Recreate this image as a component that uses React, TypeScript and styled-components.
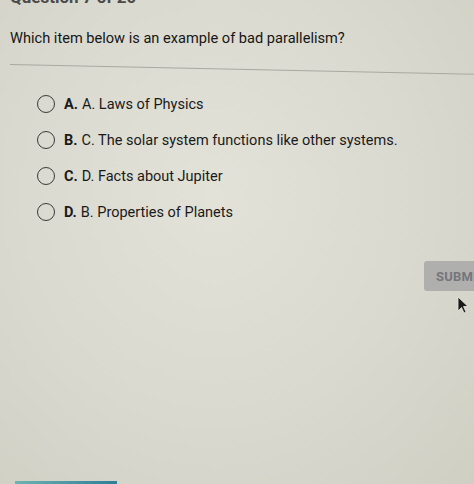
import React, { FC } from "react";
import styled, { createGlobalStyle } from "styled-components";

const GlobalStyle = createGlobalStyle`
  html, body {
    margin: 0;
    padding: 0;
    background: #d6d6cc;
  }
  body {
    font-family: Roboto, "Liberation Sans", Arial, sans-serif;
    color: #1f1f1f;
  }
`;

const Page = styled.div`
  position: relative;
  width: 474px;
  height: 484px;
  overflow: hidden;
  display: flex;
  flex-direction: column;
  background: radial-gradient(
    ellipse at 45% 40%,
    #e2e2d9 0%,
    #d9d9cf 55%,
    #cfcfc4 100%
  );
`;

const QuestionCount = styled.div`
  margin-top: -12px;
  padding-left: 10px;
  font-size: 17px;
  font-weight: 700;
  color: #4a4a48;
  height: 18px;
  line-height: 18px;
`;

const Prompt = styled.h1`
  margin: 22px 0 0 10px;
  font-size: 14.6px;
  font-weight: 400;
  line-height: 20px;
  color: #161616;
`;

const Divider = styled.hr`
  margin: 16px 0 0 10px;
  border: 0;
  border-top: 1px solid #a9a9a2;
  transform: rotate(1.2deg);
  transform-origin: left;
`;

const OptionList = styled.ul`
  list-style: none;
  margin: 28px 0 0 0;
  padding: 0 0 0 37px;
  display: flex;
  flex-direction: column;
  gap: 14px;
`;

const Option = styled.li`
  display: flex;
  align-items: center;
  gap: 9px;
  height: 22px;
  font-size: 14.5px;
  color: #1a1a1a;
`;

const Radio = styled.span`
  width: 16px;
  height: 16px;
  border: 1.5px solid #3a3a3a;
  border-radius: 50%;
  flex-shrink: 0;
`;

const Letter = styled.b`
  font-weight: 700;
  margin-right: 4px;
`;

const Actions = styled.div`
  display: flex;
  justify-content: flex-end;
  margin-top: 38px;
  margin-right: -30px;
`;

const SubmitButton = styled.button`
  width: 80px;
  height: 30px;
  border: 0;
  border-radius: 3px;
  background: #afafad;
  color: #76767a;
  font-family: inherit;
  font-size: 13px;
  font-weight: 700;
  letter-spacing: 0.2px;
  text-align: left;
  padding-left: 12px;
`;

const Cursor = styled.svg`
  position: absolute;
  left: 457px;
  top: 296px;
`;

const Footer = styled.div`
  margin-top: auto;
  height: 3px;
  padding-left: 15px;
  display: flex;
`;

const TaskItem = styled.div`
  width: 102px;
  height: 3px;
  background: linear-gradient(90deg, #6fb2b0, #2e7f98);
`;

const options = [
  { letter: "A.", text: "A. Laws of Physics" },
  { letter: "B.", text: "C. The solar system functions like other systems." },
  { letter: "C.", text: "D. Facts about Jupiter" },
  { letter: "D.", text: "B. Properties of Planets" },
];

const App: FC = () => {
  return (
    <Page>
      <GlobalStyle />
      <QuestionCount>Question 7 of 20</QuestionCount>
      <Prompt>Which item below is an example of bad parallelism?</Prompt>
      <Divider />
      <OptionList>
        {options.map((o) => (
          <Option key={o.letter}>
            <Radio />
            <span>
              <Letter>{o.letter}</Letter>
              {o.text}
            </span>
          </Option>
        ))}
      </OptionList>
      <Actions>
        <SubmitButton>SUBMIT</SubmitButton>
      </Actions>
      <Footer>
        <TaskItem />
      </Footer>
      <Cursor width="12" height="18" viewBox="0 0 12 18">
        <path d="M1 1 L1 15 L4.5 11.5 L7 17 L9 16 L6.5 10.5 L11 10.5 Z" fill="#1a1a1a" stroke="#e8e8e0" strokeWidth="0.8" />
      </Cursor>
    </Page>
  );
};

export default App;
